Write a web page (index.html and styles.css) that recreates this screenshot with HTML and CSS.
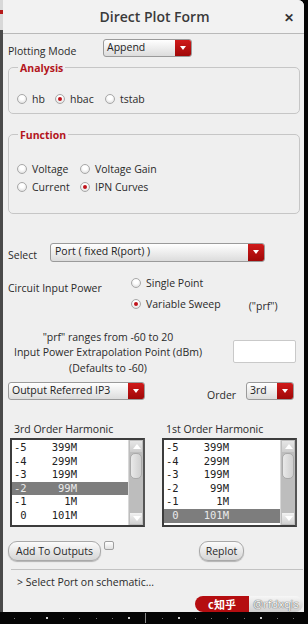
FILE: index.html
```html
<!DOCTYPE html>
<html>
<head>
<meta charset="utf-8">
<link rel="stylesheet" href="styles.css">
</head>
<body>
<div class="screen">
  <div class="side"><span class="side-red"></span></div>
  <div class="dialog">
    <div class="titlebar">
      <span class="title">Direct Plot Form</span>
      <span class="close">&#x2715;</span>
    </div>
    <div class="content">
      <div class="row mode-row">
        <span class="lbl mode-lbl">Plotting Mode</span>
        <div class="combo combo-append"><span class="combo-text">Append</span><span class="combo-btn"></span></div>
      </div>

      <fieldset class="group analysis">
        <legend>Analysis</legend>
        <div class="radios-inline">
          <label class="radio"><span class="dot"></span>hb</label>
          <label class="radio on"><span class="dot"></span>hbac</label>
          <label class="radio"><span class="dot"></span>tstab</label>
        </div>
      </fieldset>

      <fieldset class="group function">
        <legend>Function</legend>
        <div class="radio-grid">
          <label class="radio"><span class="dot"></span>Voltage</label>
          <label class="radio"><span class="dot"></span>Voltage Gain</label>
          <label class="radio"><span class="dot"></span>Current</label>
          <label class="radio on"><span class="dot"></span>IPN Curves</label>
        </div>
      </fieldset>

      <div class="row select-row">
        <span class="lbl select-lbl">Select</span>
        <div class="combo combo-port"><span class="combo-text">Port ( fixed R(port) )</span><span class="combo-btn"></span></div>
      </div>

      <div class="power">
        <span class="lbl power-lbl">Circuit Input Power</span>
        <div class="power-opts">
          <label class="radio"><span class="dot"></span>Single Point</label>
          <div class="sweep-line">
            <label class="radio on"><span class="dot"></span>Variable Sweep</label>
            <span class="prf">("prf")</span>
          </div>
        </div>
      </div>

      <div class="extrap">
        <div class="extrap-text">
          <div>"prf" ranges from -60 to 20</div>
          <div>Input Power Extrapolation Point (dBm)</div>
          <div>(Defaults to -60)</div>
        </div>
        <div class="entry"></div>
      </div>

      <div class="row ip3-row">
        <div class="combo combo-ip3"><span class="combo-text">Output Referred IP3</span><span class="combo-btn"></span></div>
        <span class="lbl order-lbl">Order</span>
        <div class="combo combo-order"><span class="combo-text">3rd</span><span class="combo-btn"></span></div>
      </div>

      <div class="lists">
        <div class="list-col">
          <div class="lbl list-title">3rd Order Harmonic</div>
          <div class="listbox">
            <div class="items">
              <div class="item"><span>-5</span><span>399M</span></div>
              <div class="item"><span>-4</span><span>299M</span></div>
              <div class="item"><span>-3</span><span>199M</span></div>
              <div class="item sel"><span>-2</span><span>99M</span></div>
              <div class="item"><span>-1</span><span>1M</span></div>
              <div class="item"><span>&nbsp;0</span><span>101M</span></div>
              <div class="item"><span>&nbsp;1</span><span>201M</span></div>
            </div>
            <div class="scroll"><span class="arrow up"></span><span class="thumb"></span><span class="arrow down"></span></div>
          </div>
        </div>
        <div class="list-col">
          <div class="lbl list-title">1st Order Harmonic</div>
          <div class="listbox">
            <div class="items">
              <div class="item"><span>-5</span><span>399M</span></div>
              <div class="item"><span>-4</span><span>299M</span></div>
              <div class="item"><span>-3</span><span>199M</span></div>
              <div class="item"><span>-2</span><span>99M</span></div>
              <div class="item"><span>-1</span><span>1M</span></div>
              <div class="item sel"><span>&nbsp;0</span><span>101M</span></div>
              <div class="item"><span>&nbsp;1</span><span>201M</span></div>
            </div>
            <div class="scroll"><span class="arrow up"></span><span class="thumb"></span><span class="arrow down"></span></div>
          </div>
        </div>
      </div>

      <div class="row btn-row">
        <button class="btn add-btn">Add To Outputs</button>
        <span class="check"></span>
        <button class="btn replot-btn">Replot</button>
      </div>

      <div class="status">&gt; Select Port on schematic...</div>

      <div class="mark">
        <span class="mark-red">c知乎</span><span class="mark-gray">@rfdxqis</span>
      </div>
    </div>
  </div>
</div>
<div class="taskbar">
  <span></span><span></span><span class="big"></span><span></span><span></span><span></span><span></span><span class="big"></span><span class="bar"></span><span></span><span class="big"></span><span></span><span></span><span></span><span></span><span class="big"></span><span></span><span></span>
</div>
</body>
</html>
```

FILE: styles.css
```css
* { box-sizing: border-box; }
html, body { margin: 0; padding: 0; }
body {
  width: 308px;
  height: 624px;
  background: #050505;
  font-family: "Open Sans", "Noto Sans", sans-serif;
  font-size: 10.5px;
  color: #2a2a2a;
  overflow: hidden;
}
.screen {
  display: flex;
  height: 612px;
}
.side {
  width: 3px;
  background: linear-gradient(#d8d8d8 0, #d8d8d8 30px, #4a4a4a 30px, #4a4a4a 100%);
  position: relative;
}
.side-red {
  position: absolute;
  left: 0; top: 10px;
  width: 3px; height: 4px;
  background: #b51a1a;
}
.dialog {
  width: 301px;
  height: 612px;
  background: #efefef;
  border-radius: 0 6px 0 0;
  display: flex;
  flex-direction: column;
}
.titlebar {
  height: 34px;
  border-bottom: 1px solid #b9b9b9;
  display: flex;
  align-items: center;
  justify-content: center;
  position: relative;
  background: #f2f2f2;
  border-radius: 0 6px 0 0;
}
.title {
  font-size: 14px;
  font-weight: 600;
  color: #3a3a3a;
  margin-left: 2px;
}
.close {
  position: absolute;
  right: 10px;
  top: 9px;
  font-size: 12px;
  font-weight: 700;
  color: #333;
}
.content {
  padding: 0 0 0 5px;
  display: flex;
  flex-direction: column;
  flex: 1;
}
.row { display: flex; align-items: center; }
.lbl { color: #2a2a2a; }

/* combo */
.combo {
  height: 18px;
  display: flex;
  align-items: stretch;
  border: 1px solid #9a9a9a;
  border-radius: 3px;
  background: linear-gradient(#ffffff, #dcdcdc);
  overflow: hidden;
}
.combo-text {
  flex: 1;
  padding-left: 3px;
  line-height: 15px;
  color: #222;
  white-space: nowrap;
}
.combo-btn {
  width: 16px;
  background: linear-gradient(#cf1a1a, #a00808);
  position: relative;
}
.combo-btn::after {
  content: "";
  position: absolute;
  left: 5px; top: 6px;
  border-left: 3px solid transparent;
  border-right: 3px solid transparent;
  border-top: 4px solid #fff;
}
.mode-row { margin-top: 5px; height: 18px; }
.mode-lbl { width: 95px; margin-top: 6px; }
.combo-append { width: 89px; }

/* groups */
.group {
  margin: 0;
  border: 1px solid #c6c6c6;
  border-radius: 5px;
  padding: 0 0 0 8px;
  width: 292px;
}
.group legend {
  color: #b3151c;
  font-weight: 700;
  padding: 0 2px;
  margin-left: 1px;
  font-size: 10.5px;
}
.analysis { margin-top: 4px; height: 53px; }
.radios-inline { display: flex; margin-top: 17px; }
.radios-inline .radio:nth-child(1) { width: 38px; }
.radios-inline .radio:nth-child(2) { width: 50px; }
.function { margin-top: 14px; height: 86px; }
.radio-grid {
  display: grid;
  grid-template-columns: 63px auto;
  row-gap: 3px;
  margin-top: 20px;
}
.radio { display: flex; align-items: center; white-space: nowrap; height: 15px; }
.dot {
  width: 10px; height: 10px;
  border-radius: 50%;
  border: 1px solid #a8a8a8;
  background: radial-gradient(circle at 50% 35%, #ffffff 30%, #d7d7d7 100%);
  margin-right: 5px;
  position: relative;
  flex: none;
}
.radio.on .dot::after {
  content: "";
  position: absolute;
  left: 2px; top: 2px;
  width: 4px; height: 4px;
  border-radius: 50%;
  background: #c0131b;
}

/* select */
.select-row { margin-top: 29px; }
.select-lbl { width: 42px; margin-top: 5px; }
.combo-port { width: 215px; height: 19px; }
.combo-port .combo-text { line-height: 15px; padding-left: 4px; }

.power { display: flex; margin-top: 14px; height: 40px; }
.power-lbl { width: 123px; padding-top: 5px; }
.power-opts { display: flex; flex-direction: column; gap: 4px; }
.sweep-line { display: flex; align-items: center; }
.prf { margin-left: 28px; margin-top: 4px; }

.extrap { display: flex; margin-top: 13px; align-items: flex-start; }
.extrap-text {
  width: 200px;
  text-align: center;
  line-height: 15.5px;
  padding-top: 1px;
}
.entry {
  margin-left: 25px;
  margin-top: 11px;
  width: 63px; height: 23px;
  background: #fff;
  border: 1px solid #c9c9c9;
  border-radius: 2px;
}

.ip3-row { margin-top: 6px; align-items: flex-start; }
.combo-ip3 { width: 137px; }
.order-lbl { margin-left: 62px; margin-top: 6px; }
.combo-order { width: 48px; margin-left: 10px; }

.lists { display: flex; margin-top: 20px; gap: 15px; }
.list-col { width: 137px; }
.list-title { padding-left: 6px; height: 16px; }
.listbox {
  margin-left: 2px;
  height: 89px;
  border: 2px solid #3c3c3c;
  border-right-color: #555;
  background: #fff;
  display: flex;
  overflow: hidden;
}
.items { flex: 1; padding-top: 1px; }
.item {
  height: 13.6px;
  display: flex;
  font-family: "DejaVu Sans Mono", monospace;
  font-size: 10.5px;
  line-height: 13.6px;
  color: #222;
  padding-left: 2px;
}
.item span:first-child { width: 22px; white-space: pre; flex: none; }
.item span:last-child { width: 41px; text-align: right; flex: none; }
.item.sel { background: #7d7d7d; color: #eaeaea; }
.scroll {
  width: 15px;
  background: #bdbdbd;
  border-left: 1px solid #d8d8d8;
  display: flex;
  flex-direction: column;
  position: relative;
}
.arrow {
  height: 11px;
  background: linear-gradient(#f2f2f2, #d0d0d0);
  margin: 1px;
  position: relative;
}
.arrow.up::after, .arrow.down::after {
  content: "";
  position: absolute;
  left: 3px; top: 3px;
  border-left: 4px solid transparent;
  border-right: 4px solid transparent;
}
.arrow.up::after { border-bottom: 5px solid #fff; }
.arrow.down::after { border-top: 5px solid #fff; }
.arrow.up { background: linear-gradient(#e6e6e6, #cdcdcd); }
.thumb {
  height: 26px;
  margin: 0 1px;
  border-radius: 5px;
  background: linear-gradient(90deg, #e9e9e9, #cfcfcf);
  border: 1px solid #aaa;
}
.arrow.down { margin-top: auto; }

.btn-row { margin-top: 14px; height: 21px; align-items: flex-start; }
.btn {
  font-family: "Open Sans", "Noto Sans", sans-serif;
  font-size: 10.5px;
  color: #2a2a2a;
  height: 20px;
  border: 1px solid #a9a9a9;
  border-radius: 9px;
  background: linear-gradient(#fbfbfb, #d6d6d6);
  padding: 0 7px;
  margin: 0;
  box-shadow: 0 1px 1px rgba(0,0,0,0.25);
}
.add-btn { width: 93px; }
.check {
  width: 10px; height: 9px;
  margin-left: 3px;
  border: 1px solid #9f9f9f;
  border-radius: 2px;
  background: linear-gradient(#ffffff, #e0e0e0);
}
.replot-btn { margin-left: 85px; width: 45px; padding: 0; }

.status {
  margin-top: 7px;
  margin-left: 3px;
  width: 292px;
  border-top: 1px solid #c2c2c2;
  padding: 5px 0 0 6px;
}
.mark {
  margin-top: 7px;
  margin-left: 187px;
  display: flex;
  height: 16px;
}
.mark-red {
  width: 54px;
  background: #b50d10;
  color: #fff;
  border-radius: 8px 0 0 8px;
  font-family: "Noto Sans CJK SC", sans-serif;
  font-size: 11px;
  line-height: 16px;
  text-align: center;
  font-weight: 700;
}
.mark-gray {
  width: 54px;
  background: linear-gradient(#f7f7f7, #cfcfcf);
  color: #fff;
  text-shadow: 0 0 1px #555, 0 0 1px #555;
  border-radius: 0 8px 8px 0;
  font-size: 11px;
  line-height: 16px;
  text-align: center;
}

.taskbar {
  height: 12px;
  display: flex;
  align-items: center;
  justify-content: space-around;
  padding: 0 6px;
}
.taskbar span { width: 1px; height: 1px; background: #777; }
.taskbar span.big { width: 2px; height: 2px; background: #ccc; }
.taskbar span.bar { width: 1px; height: 10px; background: #888; }
```
